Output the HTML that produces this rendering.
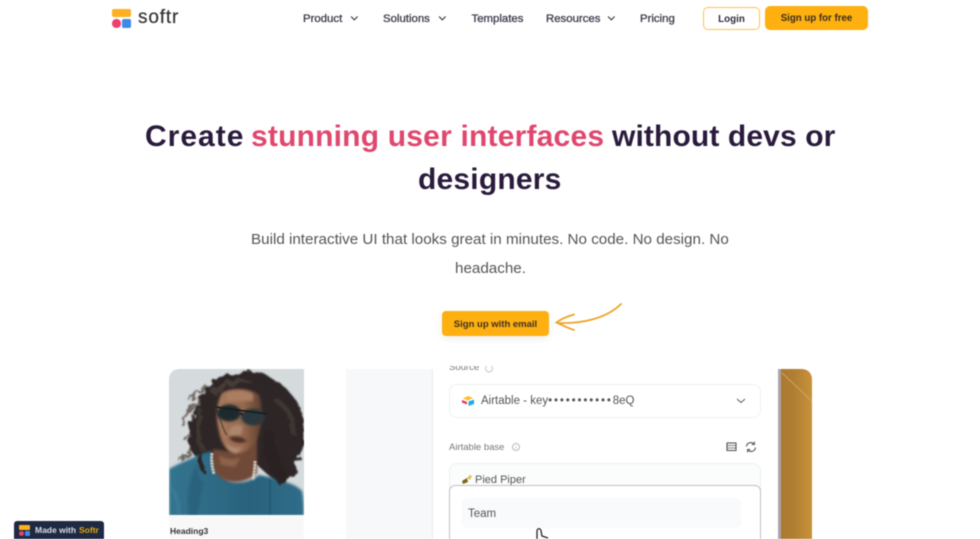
<!DOCTYPE html>
<html lang="en">
<head>
<meta charset="utf-8">
<title>Softr</title>
<style>
html,body{margin:0;padding:0;background:#fff;}
#w{position:relative;width:980px;height:539px;overflow:hidden;background:#fff;font-family:"Liberation Sans",sans-serif;filter:blur(.45px);}
#w>*{position:absolute;}
.t{white-space:nowrap;line-height:1;}
.nav{font-size:11.400px;color:#3d3a4a;top:13.500px;-webkit-text-stroke:.3px #3d3a4a;}
.h{margin:0;font-size:30px;font-weight:700;color:#2a1b3d;white-space:nowrap;line-height:1;top:122px;}
.sel{box-sizing:border-box;left:449px;width:312px;border:1px solid #eef0f2;border-radius:8px;background:#fff;}
</style>
</head>
<body>
<div id="w">
  <!-- logo -->
  <div style="left:112px;top:9px;width:19px;height:8px;background:#fdb022;border-radius:2px;"></div>
  <div style="left:112px;top:19px;width:8.500px;height:8.500px;background:#ee3f6f;border-radius:50%;"></div>
  <div style="left:122px;top:19px;width:8.500px;height:8.500px;background:#3f8ae8;border-radius:2px;"></div>
  <div class="t" style="left:138px;top:8px;font-size:19px;color:#333;letter-spacing:.85px;-webkit-text-stroke:.2px #333;">softr</div>

  <!-- nav -->
  <div class="t nav" style="left:303px;">Product</div>
  <div class="t nav" style="left:383px;">Solutions</div>
  <div class="t nav" style="left:471.500px;">Templates</div>
  <div class="t nav" style="left:546px;">Resources</div>
  <div class="t nav" style="left:640px;">Pricing</div>
  <svg style="left:0;top:0" width="980" height="40" fill="none" stroke="#3d3a4a" stroke-width="1.200">
    <path d="M351 16.500l3.300 3.300L357.600 16.500"/>
    <path d="M439 16.500l3.300 3.300L445.600 16.500"/>
    <path d="M608 16.500l3.300 3.300L614.600 16.500"/>
  </svg>
  <div class="t" style="box-sizing:border-box;left:703px;top:6.500px;width:57px;height:23.500px;border:1.500px solid #fdc24f;border-radius:5px;background:#fff;text-align:center;font-size:9.800px;font-weight:700;color:#2f2a3a;line-height:23px;">Login</div>
  <div class="t" style="left:765px;top:6px;width:103px;height:24px;background:#fdb00f;border-radius:5px;text-align:center;font-size:9.700px;font-weight:700;color:#3a2c1e;line-height:26px;">Sign up for free</div>

  <!-- hero -->
  <div class="t h" style="left:145px;letter-spacing:1px;">Create</div>
  <div class="t h" style="left:251px;color:#e0476e;letter-spacing:.2px;">stunning user interfaces</div>
  <div class="t h" style="left:612px;letter-spacing:.12px;">without devs or</div>
  <div class="t h" style="left:418px;top:165px;letter-spacing:.2px;">designers</div>
  <div class="t" style="left:251px;top:231.500px;font-size:15.200px;color:#555;">Build interactive UI that looks great in minutes. No code. No design. No</div>
  <div class="t" style="left:455px;top:260.500px;font-size:15.200px;color:#555;">headache.</div>
  <div class="t" style="left:442px;top:310.500px;width:107px;height:25.500px;background:#fdb00f;border-radius:4px;text-align:center;font-size:9.500px;font-weight:700;color:#3f3020;line-height:27px;box-shadow:0 3px 8px rgba(0,0,0,.07);">Sign up with email</div>
  <svg style="left:550px;top:298px" width="76" height="38" fill="none" stroke="#eca52a" stroke-width="1.800" stroke-linecap="round">
    <path d="M71 6C57 20 33 26 7 25"/>
    <path d="M24 16.500C17 18.500 11 21 6.500 24.500C12 27 18 30 24 32"/>
  </svg>

  <!-- card -->
  <div style="left:169px;top:515px;width:135px;height:24px;background:#f8f8f8;"></div>
  <svg style="left:169px;top:369px" width="135" height="147" viewBox="0 0 135 147">
    <defs>
      <clipPath id="c"><path d="M10 0H135V146H0V10A10 10 0 0 1 10 0Z"/></clipPath>
      <filter id="curl" x="-20%" y="-20%" width="140%" height="140%">
        <feTurbulence type="fractalNoise" baseFrequency=".13" numOctaves="2" seed="4" result="n"/>
        <feDisplacementMap in="SourceGraphic" in2="n" scale="10"/>
        <feGaussianBlur stdDeviation=".8"/>
      </filter>
      <filter id="b1" x="-20%" y="-20%" width="140%" height="140%"><feGaussianBlur stdDeviation="1.200"/></filter>
      <filter id="b2" x="-20%" y="-20%" width="140%" height="140%"><feGaussianBlur stdDeviation="2"/></filter>
      <filter id="b3" x="-50%" y="-20%" width="200%" height="140%"><feGaussianBlur stdDeviation=".5"/></filter>
      <linearGradient id="fg" x1="0" x2="1" y1="0" y2="0"><stop offset="0" stop-color="#a87a5e"/><stop offset=".6" stop-color="#95684e"/><stop offset="1" stop-color="#5f4031"/></linearGradient>
      <linearGradient id="sh" x1="0" x2="1" y1="0" y2="0"><stop offset="0" stop-color="#33748f"/><stop offset=".6" stop-color="#2a627d"/><stop offset="1" stop-color="#2f6d89"/></linearGradient>
    </defs>
    <g clip-path="url(#c)">
      <rect width="135" height="147" fill="#d5dadd"/>
      <!-- wispy left hair -->
      <g filter="url(#curl)" stroke="#5f534c" fill="none" stroke-width="3" stroke-linecap="round" opacity=".85">
        <path d="M14 56C18 42 28 30 44 22"/>
        <path d="M20 30C28 24 36 20 46 16"/>
        <path d="M16 70C22 60 28 54 40 46"/>
        <path d="M12 92C22 84 26 76 34 66"/>
        <path d="M24 46C28 38 36 32 44 30"/>
        <path d="M18 82C24 76 30 70 38 62"/>
      </g>
      <!-- hair mass -->
      <path d="M20 72C18 48 32 24 44 15C54 4 76 -2 94 5C114 12 134 32 135 56C136 74 130 90 126 100C124 112 116 116 106 112L88 96L40 92C30 94 22 86 20 72Z" fill="#2e2725" filter="url(#curl)"/>
      <path d="M40 22C50 12 70 8 84 10C74 14 56 16 46 26Z" fill="#544842" opacity=".6" filter="url(#curl)"/>
      <path d="M106 30C118 38 126 50 124 66" stroke="#51463f" stroke-width="5" fill="none" opacity=".5" filter="url(#curl)"/>
      <path d="M32 40C26 52 28 72 36 84" stroke="#4a3f39" stroke-width="6" fill="none" opacity=".6" filter="url(#curl)"/>
      <!-- shirt -->
      <path d="M0 100C10 94 22 90 32 85L42 82C46 98 52 110 64 113C74 114 82 112 90 106L100 108C112 112 126 114 133 122C135 130 135 147 135 147H0Z" fill="url(#sh)" filter="url(#b1)"/>
      <path d="M32 90C26 96 28 106 34 114L28 147H20C18 128 18 108 32 90Z" fill="#255a75" opacity=".6" filter="url(#b1)"/>
      <path d="M2 118C8 126 10 136 10 147" stroke="#4587a3" stroke-width="3" fill="none" opacity=".6" filter="url(#b1)"/>
      <path d="M100 110L102 147" stroke="#23556e" stroke-width="8" opacity=".5" filter="url(#b2)"/>
      <!-- neck and chest -->
      <path d="M44 80L44 100C50 110 58 113 66 113C74 113 82 110 88 104L88 66L70 84Z" fill="#6f4a39" filter="url(#b1)"/>
      <path d="M50 86C56 90 66 92 72 88L66 98L52 96Z" fill="#94694f" opacity=".8" filter="url(#b1)"/>
      <!-- face -->
      <path d="M53 24C60 19 80 18 90 26C94 38 93 54 90 64C86 76 78 84 68 85C58 84 52 74 50 62C46 48 48 32 53 24Z" fill="url(#fg)" filter="url(#b1)"/>
      <path d="M58 24C66 21 78 21 84 25L84 32L58 32Z" fill="#ab7e62" filter="url(#b1)"/>
      <path d="M60 62C62 56 70 54 74 58L72 66L60 66Z" fill="#b08c74" opacity=".8" filter="url(#b1)"/>
      <path d="M56 74C60 78 68 80 74 78L68 84C62 84 58 80 56 74Z" fill="#ba9377" opacity=".8" filter="url(#b1)"/>
      <!-- hair strand over face -->
      <path d="M46 38C52 50 54 62 58 66" stroke="#3a2f2a" stroke-width="1.500" fill="none" opacity=".6"/>
      <!-- glasses -->
      <ellipse cx="60" cy="44" rx="12" ry="8.500" fill="#1e292d" filter="url(#b1)"/>
      <ellipse cx="84" cy="48" rx="12" ry="8.500" fill="#2a373d" filter="url(#b1)"/>
      <path d="M47 38L98 45M71 44L74 46" stroke="#1a1a1a" stroke-width="1.500" fill="none"/>
      <!-- mouth -->
      <path d="M60 69C65 66 74 68 78 72C72 75 64 74 60 69Z" fill="#4d2f25" filter="url(#b1)"/>
      <!-- necklace -->
      <path d="M43 84C42 92 43 98 45 105M86 92C86 98 85 104 84 111" stroke="#dfdacd" stroke-width="2.800" stroke-dasharray="2.400 .7" fill="none" filter="url(#b3)"/>
      <!-- hair locks over shoulder -->
      <path d="M30 84C30 92 32 98 36 102" stroke="#2a2322" stroke-width="5" fill="none" filter="url(#curl)"/>
      <path d="M98 62C100 84 106 100 116 112" stroke="#2a2322" stroke-width="14" fill="none" filter="url(#curl)"/>
    </g>
  </svg>
  <div class="t" style="left:170px;top:527px;font-size:8.500px;font-weight:700;color:#333;">Heading3</div>

  <!-- app panels -->
  <div style="left:346px;top:369px;width:86px;height:170px;background:#f7f8f9;"></div>
  <div style="left:432px;top:369px;width:1px;height:170px;background:#ececee;"></div>
  <div style="left:449px;top:366px;width:40px;height:6px;overflow:hidden;"><div class="t" style="margin-top:-3px;font-size:9.500px;color:#777;">Source</div></div>
  <svg style="left:484px;top:366px" width="10" height="8"><circle cx="5" cy="2.500" r="3.500" fill="none" stroke="#c5c8cc"/></svg>

  <div class="sel" style="top:384px;height:34px;"></div>
  <svg style="left:461px;top:395px" width="14" height="12">
    <path d="M2 3.500L7 1L12 3L7 5.500Z" fill="#fbbf24"/>
    <path d="M7.500 6.500L13 4.500V9L7.500 11Z" fill="#22a7f0"/>
    <path d="M1 5L6 7V9.500L1 7.500Z" fill="#e5334f"/>
  </svg>
  <div class="t" style="left:481px;top:395.500px;font-size:11.500px;color:#555;">Airtable - key<span style="letter-spacing:1.850px;">•••••••••••</span>8eQ</div>
  <svg style="left:0;top:0" width="980" height="539" fill="none" stroke="#666" stroke-width="1.100">
    <path d="M737 399l4 3.500 4-3.500"/>
    <path d="M737 478l4 3.500 4-3.500"/>
    <rect x="727" y="443" width="9" height="7.500" stroke="#555"/>
    <path d="M727 445.500h9M727 448h9" stroke="#555" stroke-width=".8"/>
    <path d="M746.500 446.500a4.300 4.300 0 0 1 7.500-2.500M755.500 447.500a4.300 4.300 0 0 1-7.500 2.500" stroke="#555"/>
    <path d="M754.500 441.500v3h-2.800M747.500 452.500v-3h2.800" stroke="#555" stroke-width=".9"/>
    <circle cx="516" cy="447" r="3.500" stroke="#b9bdc2"/>
    <path d="M516 446.500v2.200M516 445v.6" stroke="#b9bdc2" stroke-width=".8"/>
  </svg>
  <div class="t" style="left:449px;top:442.500px;font-size:9.500px;color:#777;">Airtable base</div>

  <div class="sel" style="top:463px;height:40px;background:#fbfcfc;"></div>
  <svg style="left:460px;top:473px" width="14" height="12"><path d="M2 8L7 5L8 9L3 11Z" fill="#7a6420"/><path d="M7 5L10 2L12 3L10 7Z" fill="#dfc24a"/></svg>
  <div class="t" style="left:475px;top:475px;font-size:11px;color:#555;">Pied Piper</div>
  <div style="box-sizing:border-box;left:449px;top:485px;width:312px;height:60px;background:#fff;border:1px solid #bfc1c4;border-radius:6px;"></div>
  <div style="left:462px;top:498px;width:279px;height:30px;background:#f9fafb;border-radius:5px;"></div>
  <div class="t" style="left:468px;top:508.500px;font-size:11.500px;color:#555;">Team</div>
  <svg style="left:534px;top:528px" width="22" height="11"><path d="M3 11V3C3 0 7 0 7 3L8 8L14 10" fill="#fff" stroke="#222" stroke-width="1.300"/></svg>

  <!-- gold -->
  <div style="left:778px;top:369px;width:33.500px;height:170px;border-radius:0 10px 0 0;background:linear-gradient(90deg,#a9772f 0%,#b07e33 45%,#c8923a 100%);"></div>
  <div style="left:778px;top:369px;width:2.500px;height:170px;background:#aaa5ab;"></div>
  <svg style="left:780px;top:369px" width="32" height="36"><path d="M2 4L32 32" stroke="#c9a569" stroke-width="1" fill="none"/></svg>

  <!-- badge -->
  <div style="left:14px;top:521px;width:90px;height:20px;background:#1e2a44;border-radius:3px;"></div>
  <div style="left:19px;top:525px;width:11px;height:5px;background:#fdb022;border-radius:1px;"></div>
  <div style="left:19px;top:531px;width:5px;height:5px;background:#ee3f6f;border-radius:50%;"></div>
  <div style="left:25px;top:531px;width:5px;height:5px;background:#3f8ae8;border-radius:1px;"></div>
  <div class="t" style="left:35px;top:526px;font-size:8.500px;font-weight:700;color:#d9dde3;">Made with</div>
  <div class="t" style="left:79px;top:526px;font-size:8.500px;font-weight:700;color:#e5a50f;">Softr</div>
</div>
</body>
</html>
